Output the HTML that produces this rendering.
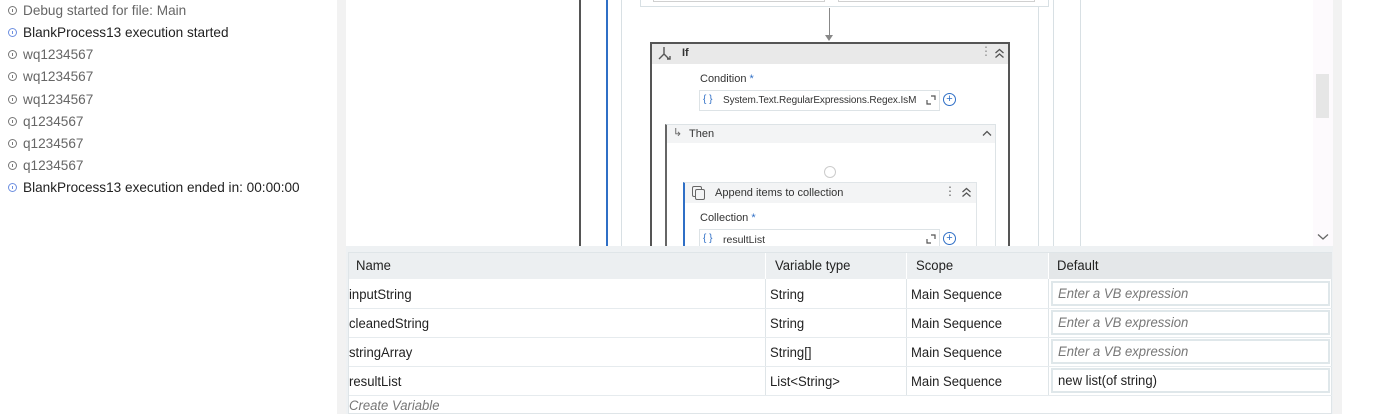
<!DOCTYPE html>
<html><head><meta charset="utf-8"><style>
*{margin:0;padding:0;box-sizing:border-box}
body{width:1380px;height:414px;overflow:hidden;background:#fff;font-family:"Liberation Sans",sans-serif;position:relative}
.a{position:absolute}
.log{left:8px;font-size:13.6px;color:#666;height:22px;line-height:22px;white-space:nowrap}
.log i{display:inline-block;width:9px;height:9px;border:1.3px solid #777;border-radius:50%;margin-right:6px;vertical-align:0px;position:relative}
.log i:after{content:"";position:absolute;left:2.5px;top:1.5px;width:1.3px;height:3.5px;background:#777}
.log.b{color:#222}.log.b i{border-color:#6d8fe0}.log.b i:after{background:#6d8fe0}
.t{font-size:13.5px;color:#222;white-space:nowrap;transform:scaleX(.97);transform-origin:left}
.cell{position:absolute;height:29px;line-height:29px}
.hdr{background:#eceff1;color:#333}
.inp{position:absolute;background:#fff;border:2px solid #dfe7ea;height:25px;line-height:21px;padding-left:5px;font-size:13px;color:#777;font-style:italic}
</style></head><body>
<div class="a log" style="top:0"><i></i>Debug started for file: Main</div>
<div class="a log b" style="top:22px"><i></i>BlankProcess13 execution started</div>
<div class="a log" style="top:44px"><i></i>wq1234567</div>
<div class="a log" style="top:66px"><i></i>wq1234567</div>
<div class="a log" style="top:89px"><i></i>wq1234567</div>
<div class="a log" style="top:111px"><i></i>q1234567</div>
<div class="a log" style="top:133px"><i></i>q1234567</div>
<div class="a log" style="top:155px"><i></i>q1234567</div>
<div class="a log b" style="top:177px"><i></i>BlankProcess13 execution ended in: 00:00:00</div>
<div class="a" style="left:337px;top:0;width:9px;height:414px;background:#f2f2f2"></div>
<div class="a" style="left:1333px;top:0;width:9px;height:414px;background:#f2f2f2"></div>
<div class="a" style="left:1313px;top:0;width:20px;height:246px;background:#fdfafd"></div>
<div class="a" style="left:1316px;top:74px;width:13px;height:44px;background:#e6e6e6"></div>
<svg class="a" style="left:1317px;top:233px" width="12" height="8"><path d="M1 1.5 L6 6 L11 1.5" stroke="#666" stroke-width="1.3" fill="none"/></svg>
<div class="a" style="left:579px;top:0;width:2px;height:246px;background:#555"></div>
<div class="a" style="left:606px;top:0;width:2px;height:246px;background:#2f6fc6"></div>
<div class="a" style="left:621px;top:0;width:1px;height:246px;background:#d8e0e4"></div>
<div class="a" style="left:1038px;top:0;width:1px;height:246px;background:#d8e0e4"></div>
<div class="a" style="left:1053px;top:0;width:1px;height:246px;background:#d8e0e4"></div>
<div class="a" style="left:1080px;top:0;width:1px;height:246px;background:#d8e0e4"></div>
<div class="a" style="left:640px;top:0;width:409px;height:7px;border:1px solid #d8e0e4;border-top:none;background:#fff"></div>
<div class="a" style="left:653px;top:0;width:172px;height:2px;border:1px solid #d0d0d0;border-top:none"></div>
<div class="a" style="left:838px;top:0;width:197px;height:2px;border:1px solid #d0d0d0;border-top:none"></div>
<div class="a" style="left:829px;top:8px;width:1px;height:28px;background:#888"></div>
<div class="a" style="left:825px;top:35px;width:0;height:0;border-left:4px solid transparent;border-right:4px solid transparent;border-top:6px solid #888"></div>
<div class="a" style="left:650px;top:42px;width:360px;height:210px;border:2px solid #555;border-bottom:none;background:#fff"></div>
<div class="a" style="left:652px;top:44px;width:356px;height:20px;background:#e9e9e9"></div>
<svg class="a" style="left:657px;top:46px" width="16" height="16"><path d="M7 1 V8 M7 8 L2 13 M7 8 L12 13 M10 13 H13 V10" stroke="#555" stroke-width="1.4" fill="none"/></svg>
<div class="a" style="left:682px;top:47px;font-size:11px;font-weight:bold;color:#333">If</div>
<div class="a" style="left:980px;top:44px;font-size:12px;color:#888">&#8942;</div>
<svg class="a" style="left:994px;top:48px" width="11" height="11"><path d="M1.5 5 L5.5 1.5 L9.5 5 M1.5 9.5 L5.5 6 L9.5 9.5" stroke="#555" stroke-width="1.3" fill="none"/></svg>
<div class="a" style="left:700px;top:73px;font-size:11px;color:#333">Condition <span style="color:#2f6fc6">*</span></div>
<div class="a" style="left:699px;top:90px;width:241px;height:21px;border:1px solid #dde3e6"></div>
<div class="a" style="left:703px;top:94px;font-size:10px;color:#2f6fc6">{ }</div>
<div class="a" style="left:723px;top:95px;font-size:10px;color:#333;letter-spacing:-0.1px">System.Text.RegularExpressions.Regex.IsM</div>
<svg class="a" style="left:926px;top:95px" width="10" height="10"><path d="M1 5 V9 H5 M5 1 H9 V5" stroke="#555" stroke-width="1.2" fill="none"/></svg>
<div class="a" style="left:943px;top:93px;width:13px;height:13px;border:1px solid #2f6fc6;border-radius:50%;color:#2f6fc6;font-size:11px;line-height:10px;text-align:center">+</div>
<div class="a" style="left:665px;top:124px;width:331px;height:128px;border:1px solid #dde3e6;border-left:2px solid #666"></div>
<div class="a" style="left:667px;top:125px;width:328px;height:18px;background:#f3f4f5"></div>
<div class="a" style="left:673px;top:126px;font-size:11px;color:#666">&#8627;</div>
<div class="a" style="left:689px;top:128px;font-size:11px;color:#333">Then</div>
<svg class="a" style="left:982px;top:130px" width="10" height="7"><path d="M1 5.5 L5 1.5 L9 5.5" stroke="#555" stroke-width="1.3" fill="none"/></svg>
<div class="a" style="left:824px;top:166px;width:12px;height:12px;border:1px solid #ccc;border-radius:50%"></div>
<div class="a" style="left:683px;top:182px;width:294px;height:70px;border:1px solid #e0e5e8;border-left:2px solid #2f6fc6"></div>
<div class="a" style="left:685px;top:183px;width:291px;height:20px;background:#f3f4f5"></div>
<div class="a" style="left:692px;top:186px;width:10px;height:11px;border:1.3px solid #666;border-radius:2px"></div>
<div class="a" style="left:695px;top:189px;width:10px;height:11px;border:1.3px solid #666;border-radius:2px;background:#f3f4f5"></div>
<div class="a" style="left:715px;top:187px;font-size:11px;color:#333">Append items to collection</div>
<div class="a" style="left:944px;top:184px;font-size:12px;color:#666">&#8942;</div>
<svg class="a" style="left:961px;top:187px" width="11" height="11"><path d="M1.5 5 L5.5 1.5 L9.5 5 M1.5 9.5 L5.5 6 L9.5 9.5" stroke="#555" stroke-width="1.3" fill="none"/></svg>
<div class="a" style="left:700px;top:212px;font-size:11px;color:#333">Collection <span style="color:#2f6fc6">*</span></div>
<div class="a" style="left:699px;top:229px;width:241px;height:20px;border:1px solid #dde3e6"></div>
<div class="a" style="left:703px;top:233px;font-size:10px;color:#2f6fc6">{ }</div>
<div class="a" style="left:723px;top:234px;font-size:10.5px;color:#333">resultList</div>
<svg class="a" style="left:926px;top:234px" width="10" height="10"><path d="M1 5 V9 H5 M5 1 H9 V5" stroke="#555" stroke-width="1.2" fill="none"/></svg>
<div class="a" style="left:943px;top:232px;width:13px;height:13px;border:1px solid #2f6fc6;border-radius:50%;color:#2f6fc6;font-size:11px;line-height:10px;text-align:center">+</div>
<div class="a" style="left:346px;top:246px;width:987px;height:168px;background:#eef1f3"></div>
<div class="a" style="left:348px;top:252px;width:984px;height:162px;background:#fff;border:1px solid #dfe5e8"></div>
<div class="cell hdr" style="left:349px;top:253px;width:416px;height:26px;line-height:26px;padding-left:7px"><div class="t">Name</div></div>
<div class="cell hdr" style="left:766px;top:253px;width:140px;height:26px;line-height:26px;padding-left:9px"><div class="t">Variable type</div></div>
<div class="cell hdr" style="left:907px;top:253px;width:141px;height:26px;line-height:26px;padding-left:9px"><div class="t">Scope</div></div>
<div class="cell hdr" style="left:1049px;top:253px;width:283px;height:26px;line-height:26px;padding-left:8px;background:#e4e7e9"><div class="t">Default</div></div>
<div class="a" style="left:765px;top:279px;width:1px;height:117px;background:#dfe5e8"></div>
<div class="a" style="left:906px;top:279px;width:1px;height:117px;background:#dfe5e8"></div>
<div class="a" style="left:1048px;top:279px;width:1px;height:117px;background:#dfe5e8"></div>
<div class="a" style="left:349px;top:308px;width:983px;height:1px;background:#e6ebee"></div>
<div class="a" style="left:349px;top:337px;width:983px;height:1px;background:#e6ebee"></div>
<div class="a" style="left:349px;top:366px;width:983px;height:1px;background:#e6ebee"></div>
<div class="a" style="left:349px;top:395px;width:983px;height:1px;background:#e6ebee"></div>
<div class="cell" style="left:349px;top:280px"><div class="t">inputString</div></div>
<div class="cell" style="left:770px;top:280px"><div class="t">String</div></div>
<div class="cell" style="left:911px;top:280px"><div class="t">Main Sequence</div></div>
<div class="inp" style="left:1051px;top:281px;width:279px"><div class="t" style="color:#777;line-height:21px">Enter a VB expression</div></div>
<div class="cell" style="left:349px;top:309px"><div class="t">cleanedString</div></div>
<div class="cell" style="left:770px;top:309px"><div class="t">String</div></div>
<div class="cell" style="left:911px;top:309px"><div class="t">Main Sequence</div></div>
<div class="inp" style="left:1051px;top:310px;width:279px"><div class="t" style="color:#777;line-height:21px">Enter a VB expression</div></div>
<div class="cell" style="left:349px;top:338px"><div class="t">stringArray</div></div>
<div class="cell" style="left:770px;top:338px"><div class="t">String[]</div></div>
<div class="cell" style="left:911px;top:338px"><div class="t">Main Sequence</div></div>
<div class="inp" style="left:1051px;top:339px;width:279px"><div class="t" style="color:#777;line-height:21px">Enter a VB expression</div></div>
<div class="cell" style="left:349px;top:367px"><div class="t">resultList</div></div>
<div class="cell" style="left:770px;top:367px"><div class="t">List&lt;String&gt;</div></div>
<div class="cell" style="left:911px;top:367px"><div class="t">Main Sequence</div></div>
<div class="inp" style="left:1051px;top:368px;width:279px;font-style:normal"><div class="t" style="line-height:21px">new list(of string)</div></div>
<div class="cell" style="left:349px;top:395px;height:22px;line-height:22px"><div class="t" style="color:#777;font-style:italic">Create Variable</div></div>
</body></html>
